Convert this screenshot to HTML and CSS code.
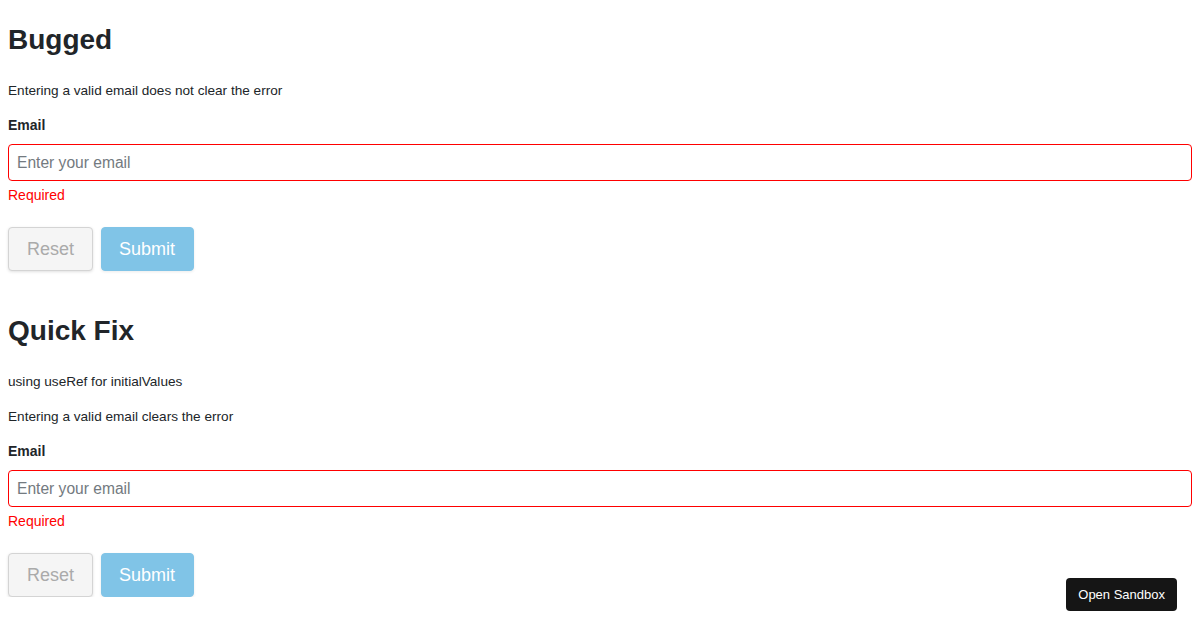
FILE: index.html
```html
<!DOCTYPE html>
<html lang="en">
<head>
<meta charset="utf-8">
<title>Formik reset demo</title>
<link rel="stylesheet" href="styles.css">
</head>
<body>
<div class="page">
  <section class="demo">
    <h1 class="title">Bugged</h1>
    <p class="note">Entering a valid email does not clear the error</p>
    <form class="form">
      <label class="label" for="email1">Email</label>
      <input class="input" id="email1" type="email" placeholder="Enter your email">
      <div class="error">Required</div>
      <div class="actions">
        <button type="button" class="btn btn-reset">Reset</button>
        <button type="button" class="btn btn-submit">Submit</button>
      </div>
    </form>
  </section>
  <section class="demo demo-next">
    <h1 class="title">Quick Fix</h1>
    <p class="note">using useRef for initialValues</p>
    <p class="note">Entering a valid email clears the error</p>
    <form class="form">
      <label class="label" for="email2">Email</label>
      <input class="input" id="email2" type="email" placeholder="Enter your email">
      <div class="error">Required</div>
      <div class="actions">
        <button type="button" class="btn btn-reset">Reset</button>
        <button type="button" class="btn btn-submit">Submit</button>
      </div>
    </form>
  </section>
</div>
<a class="sandbox" href="#">Open Sandbox</a>
</body>
</html>
```

FILE: styles.css
```css
html, body {
  margin: 0;
  padding: 0;
  background: #ffffff;
}
body {
  font-family: "Liberation Sans", Arial, sans-serif;
  color: #212529;
}
.page {
  padding: 0 8px;
}
.title {
  font-size: 28px;
  line-height: 32px;
  font-weight: bold;
  margin: 24px 0 27px;
}
.demo-next .title {
  margin-top: 44px;
  margin-bottom: 27px;
}
.note {
  font-size: 13.6px;
  line-height: 16px;
  margin: 0 0 19px;
}
.form {
  display: flex;
  flex-direction: column;
  margin: 0;
}
.label {
  font-size: 14px;
  line-height: 16px;
  font-weight: bold;
  margin: -1px 0 11px;
}
.input {
  box-sizing: border-box;
  height: 37px;
  width: 100%;
  border: 1px solid #ff0000;
  border-radius: 4px;
  padding: 0 8px;
  font-family: "Liberation Sans", Arial, sans-serif;
  font-size: 15.6px;
  color: #212529;
  outline: none;
  margin: 0;
}
.input::placeholder {
  color: #737a80;
}
.error {
  font-size: 14px;
  line-height: 16px;
  color: #ff0000;
  margin-top: 6px;
}
.actions {
  display: flex;
  gap: 8px;
  margin-top: 24px;
}
.btn {
  box-sizing: border-box;
  height: 44px;
  padding: 0 18px;
  border-radius: 4px;
  font-family: "Liberation Sans", Arial, sans-serif;
  font-size: 18px;
  cursor: default;
}
.btn-reset {
  background: #f5f5f5;
  border: 1px solid #d4d4d4;
  color: #aaaaaa;
  box-shadow: 0 1px 3px rgba(0, 0, 0, 0.12);
}
.btn-submit {
  background: #80c4e7;
  border: 1px solid #80c4e7;
  color: #ffffff;
  padding: 0 18px 0 17px;
  box-shadow: 0 1px 3px rgba(0, 0, 0, 0.08);
}
.sandbox {
  position: fixed;
  right: 23px;
  bottom: 19px;
  box-sizing: border-box;
  height: 33px;
  padding: 0 12px;
  display: flex;
  align-items: center;
  background: #151515;
  color: #ffffff;
  border-radius: 4px;
  font-size: 13px;
  text-decoration: none;
}
```
